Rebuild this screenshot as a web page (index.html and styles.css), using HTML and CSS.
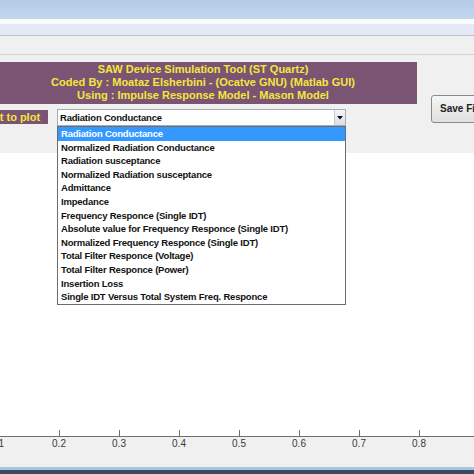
FILE: index.html
```html
<!DOCTYPE html>
<html>
<head>
<meta charset="utf-8">
<link rel="stylesheet" href="styles.css">
</head>
<body>
<div class="window">
  <div class="titlebar"></div>
  <div class="gap"></div>
  <div class="menubar"></div>
  <div class="toolbar"></div>
  <div class="panel">
    <div class="left">
      <div class="banner">
        <div>SAW Device Simulation Tool (ST Quartz)</div>
        <div>Coded By : Moataz Elsherbini - (Ocatve GNU) (Matlab GUI)</div>
        <div>Using : Impulse Response Model - Mason Model</div>
      </div>
      <div class="controls">
        <div class="label">Select to plot</div>
        <div class="select">
          <span class="select-text">Radiation Conductance</span>
          <span class="arrow"><svg width="6" height="4" viewBox="0 0 6 4"><path d="M0 0 H6 L3 3.5 Z" fill="#111"/></svg></span>
        </div>
      </div>
    </div>
    <div class="button">Save Figure</div>
  </div>
  <div class="plot">
    <svg width="474" height="314" viewBox="0 0 474 314">
      <rect x="0" y="0" width="474" height="283" fill="#ffffff"/>
      <rect x="0" y="283" width="474" height="31" fill="#f0f0f0"/>
      <line x1="0" y1="283.5" x2="474" y2="283.5" stroke="#6e6e6e" stroke-width="1"/>
      <g stroke="#6e6e6e" stroke-width="1">
        <line x1="-0.5" y1="277" x2="-0.5" y2="283"/>
        <line x1="59.5" y1="277" x2="59.5" y2="283"/>
        <line x1="119.5" y1="277" x2="119.5" y2="283"/>
        <line x1="179.5" y1="277" x2="179.5" y2="283"/>
        <line x1="239.5" y1="277" x2="239.5" y2="283"/>
        <line x1="299.5" y1="277" x2="299.5" y2="283"/>
        <line x1="359.5" y1="277" x2="359.5" y2="283"/>
        <line x1="419.5" y1="277" x2="419.5" y2="283"/>
      </g>
      <g class="ticks" text-anchor="middle">
        <text x="-3" y="294">0.1</text>
        <text x="59" y="294">0.2</text>
        <text x="119" y="294">0.3</text>
        <text x="179" y="294">0.4</text>
        <text x="239" y="294">0.5</text>
        <text x="299" y="294">0.6</text>
        <text x="359" y="294">0.7</text>
        <text x="419" y="294">0.8</text>
      </g>
    </svg>
  </div>
  <div class="taskbar-light"></div>
  <div class="taskbar-dark"></div>

  <ul class="dropdown">
    <li class="selected">Radiation Conductance</li>
    <li>Normalized Radiation Conductance</li>
    <li>Radiation susceptance</li>
    <li>Normalized Radiation susceptance</li>
    <li>Admittance</li>
    <li>Impedance</li>
    <li>Frequency Responce (Single IDT)</li>
    <li>Absolute value for Frequency Responce (Single IDT)</li>
    <li>Normalized Frequency Responce (Single IDT)</li>
    <li>Total Filter Responce (Voltage)</li>
    <li>Total Filter Responce (Power)</li>
    <li>Insertion Loss</li>
    <li>Single IDT Versus Total System Freq. Responce</li>
  </ul>
</div>
</body>
</html>
```
FILE: styles.css
```css
html, body {
  margin: 0;
  padding: 0;
}
body {
  width: 474px;
  height: 474px;
  overflow: hidden;
  font-family: "Liberation Sans", Arial, sans-serif;
  background: #f0f0f0;
}
.window {
  position: relative;
  width: 474px;
  height: 474px;
  overflow: hidden;
  display: flex;
  flex-direction: column;
}
.titlebar {
  height: 19px;
  background: linear-gradient(to bottom, #b3cbe6, #c3d7ee);
}
.gap {
  height: 5px;
  background: #fbfcfe;
}
.menubar {
  height: 11px;
  background: #e5e9f5;
  border-bottom: 1px solid #bcc2cf;
}
.toolbar {
  height: 18px;
  background: #f0f0f0;
  border-bottom: 1px solid #d4d4d4;
}
.panel {
  height: 98px;
  background: #f0f0f0;
  display: flex;
  flex-shrink: 0;
}
.left {
  width: 431px;
  flex-shrink: 0;
  padding-top: 7px;
}
.banner {
  margin-left: -11px;
  width: 428px;
  height: 42px;
  box-sizing: border-box;
  padding-top: 1px;
  background: #7a5573;
  color: #f6e53c;
  font-weight: bold;
  font-size: 11px;
  line-height: 13px;
  text-align: center;
  white-space: nowrap;
}
.controls {
  display: flex;
  align-items: flex-start;
  margin-top: 5px;
}
.label {
  margin-left: -34px;
  margin-top: 1px;
  width: 82px;
  height: 14px;
  box-sizing: border-box;
  padding-left: 5px;
  background: #7a5573;
  color: #f6e53c;
  font-weight: bold;
  font-size: 11px;
  line-height: 14px;
  white-space: nowrap;
  overflow: hidden;
}
.select {
  margin-left: 9px;
  width: 289px;
  height: 17px;
  box-sizing: border-box;
  border: 1px solid #a8abb2;
  background: #ffffff;
  display: flex;
  align-items: center;
  justify-content: space-between;
}
.select-text {
  padding-left: 2px;
  font-size: 9.5px;
  letter-spacing: -0.2px;
  font-weight: bold;
  color: #111;
}
.arrow {
  width: 11px;
  height: 15px;
  box-sizing: border-box;
  border-left: 1px solid #c9ccd2;
  background: linear-gradient(to bottom, #f4f6f9, #d9dde4);
  display: flex;
  align-items: center;
  justify-content: center;
}
.button {
  margin-top: 40px;
  width: 70px;
  height: 28px;
  flex-shrink: 0;
  box-sizing: border-box;
  border: 1px solid #8a8a8a;
  border-radius: 3px;
  background: linear-gradient(to bottom, #f5f5f5, #e0e0e0);
  font-weight: bold;
  font-size: 10px;
  line-height: 26px;
  padding-left: 8px;
  color: #222;
  white-space: nowrap;
}
.plot {
  height: 314px;
  flex-shrink: 0;
}
.plot svg {
  display: block;
}
.ticks text {
  font-family: "Liberation Sans", Arial, sans-serif;
  font-size: 10px;
  fill: #3a3a3a;
}
.taskbar-light {
  height: 3px;
  background: #a9c4e1;
}
.taskbar-dark {
  height: 4px;
  background: #3c4a5e;
}
.dropdown {
  position: absolute;
  left: 57px;
  top: 126px;
  width: 289px;
  margin: 0;
  padding: 0;
  list-style: none;
  box-sizing: border-box;
  border: 1px solid #6d6d6d;
  background: #ffffff;
}
.dropdown li {
  height: 13.6px;
  line-height: 13.6px;
  padding-left: 3px;
  font-size: 9.5px;
  letter-spacing: -0.2px;
  font-weight: bold;
  color: #111;
  white-space: nowrap;
}
.dropdown li.selected {
  background: #3399ff;
  color: #ffffff;
}
```
